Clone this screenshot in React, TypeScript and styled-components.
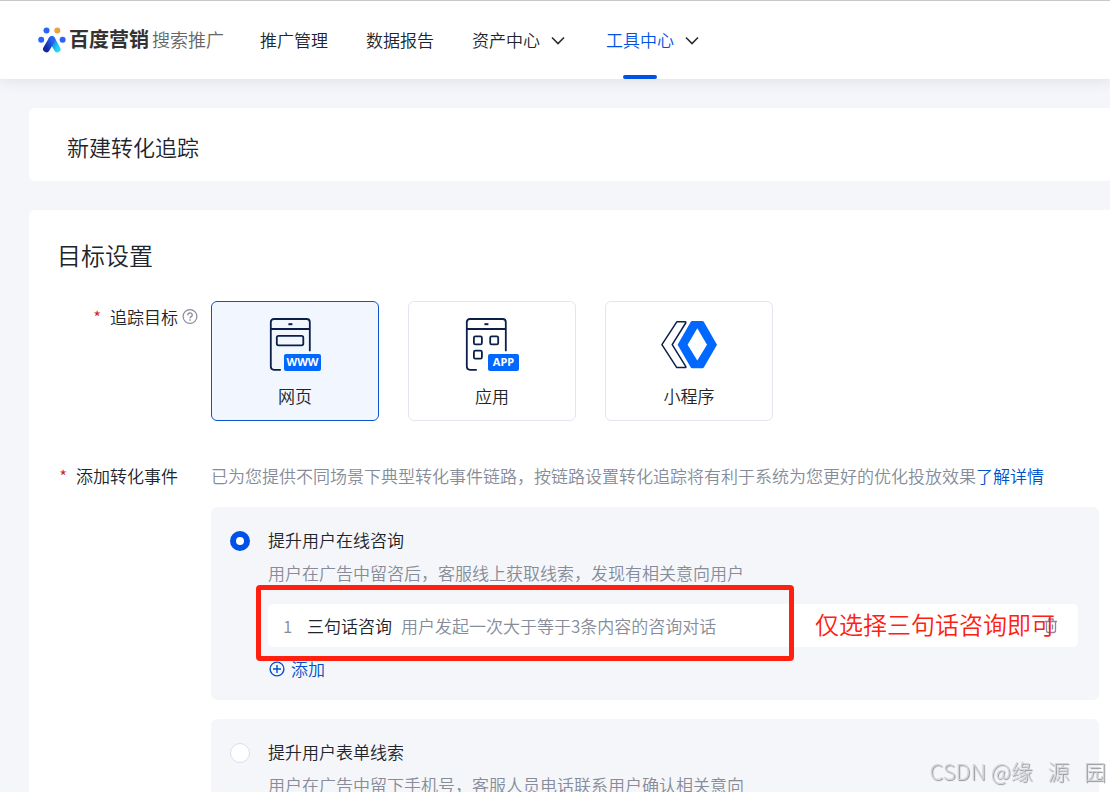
import React, { useState } from "react";
import styled, { createGlobalStyle } from "styled-components";

const GlobalStyle = createGlobalStyle`
  *, *::before, *::after { box-sizing: border-box; }
  body {
    margin: 0;
    background: #f5f6fa;
    color: #20242b;
    font-family: "Noto Sans CJK SC", "Microsoft YaHei", sans-serif;
    font-size: 17px;
    font-weight: 350;
    line-height: 24px;
  }
  button, input { font: inherit; }
`;

const Page = styled.div`
  height: 100vh;
  overflow: hidden;
`;

const Header = styled.header`
  display: flex;
  align-items: center;
  height: 79px;
  padding-left: 38px;
  border-top: 1px solid #c8c8c8;
  background: #fff;
  box-shadow: 0 2px 14px rgba(30, 35, 50, 0.1);
`;

const Brand = styled.a`
  display: flex;
  align-items: center;
  width: 222px;
  color: #333;
  text-decoration: none;
`;

const BrandName = styled.span`
  margin-left: 3px;
  padding-bottom: 2px;
  font-size: 20px;
  font-weight: 700;
`;

const BrandProduct = styled.span`
  margin-left: 3px;
  padding-bottom: 3px;
  font-size: 18px;
  color: #666;
`;

const Nav = styled.nav`
  display: flex;
  gap: 38px;
  height: 100%;
`;

const NavLink = styled.a`
  display: flex;
  align-items: center;
  gap: 10px;
  color: #20242b;
  text-decoration: none;

  svg { margin-right: 2px; }
`;

const NavText = styled.span<{ $active?: boolean }>`
  position: relative;
  display: flex;
  align-items: center;
  height: 100%;
  color: ${(p) => (p.$active ? "#0052e6" : "inherit")};

  &::after {
    content: "";
    display: ${(p) => (p.$active ? "block" : "none")};
    position: absolute;
    bottom: 0;
    left: 25%;
    right: 25%;
    height: 4px;
    border-radius: 2px;
    background: #0052e6;
  }
`;

const Main = styled.main`
  display: flex;
  flex-direction: column;
  gap: 29px;
  padding: 29px 0 0 29px;
`;

const TitleCard = styled.section`
  padding: 22px 38px 19px;
  border-radius: 6px 0 0 6px;
  background: #fff;
`;

const PageTitle = styled.h1`
  margin: 0;
  font-size: 22px;
  font-weight: 350;
  line-height: 32px;
`;

const FormCard = styled.section`
  padding: 29px 11px 29px 0;
  border-radius: 6px 0 0 0;
  background: #fff;
`;

const SectionTitle = styled.h2`
  margin: 0 0 30px 28px;
  font-size: 24px;
  font-weight: 350;
  line-height: 32px;
`;

const FormRow = styled.div`
  display: grid;
  grid-template-columns: 169px 1fr;
  column-gap: 13px;

  & + & { margin-top: 43px; }
`;

const FieldLabel = styled.div<{ $tall?: boolean }>`
  display: flex;
  justify-content: flex-end;
  align-items: center;
  height: 24px;
  margin-top: ${(p) => (p.$tall ? "4px" : "0")};
`;

const Required = styled.span`
  margin-right: 9px;
  color: #d0202e;
`;

const HelpSlot = styled.span`
  display: flex;
  width: 16px;
  margin-left: 4px;
`;

const Options = styled.div`
  display: flex;
  gap: 29px;
`;

const OptionCard = styled.label<{ $selected: boolean }>`
  display: flex;
  flex-direction: column;
  align-items: center;
  gap: 12px;
  width: 168px;
  height: 120px;
  padding-top: 16px;
  border: 1px solid ${(p) => (p.$selected ? "#0a55cc" : "#e2e6f0")};
  border-radius: 6px;
  background: ${(p) => (p.$selected ? "#f1f6ff" : "#fff")};
  cursor: pointer;
`;

const HiddenRadio = styled.input`
  position: absolute;
  opacity: 0;
  pointer-events: none;
`;

const Hint = styled.p`
  margin: 0 0 19px;
  color: #868c99;
  white-space: nowrap;
`;

const HintLink = styled.a`
  color: #0052cc;
  text-decoration: none;
`;

const Panels = styled.div`
  display: flex;
  flex-direction: column;
  gap: 19px;
`;

const Panel = styled.div`
  display: flex;
  gap: 18px;
  padding: 21px 21px 19px 19px;
  border-radius: 6px;
  background: #f5f6fa;
`;

const Radio = styled.input`
  appearance: none;
  flex: none;
  width: 20px;
  height: 20px;
  margin: 3px 0 0;
  border: 1px solid #dadeea;
  border-radius: 50%;
  background: #fff;

  &:checked { border: 6px solid #0052e6; }
`;

const PanelBody = styled.div`
  flex: 1;
  min-width: 0;
`;

const PanelTitle = styled.label`
  display: block;
`;

const PanelText = styled.p`
  margin: 9px 0 0;
  color: #868c99;
`;

const EventRow = styled.div`
  position: relative;
  display: flex;
  align-items: center;
  height: 43px;
  margin: 19px 0 10px;
  padding: 0 20px 0 15px;
  border-radius: 5px;
  background: #fff;
  color: #868c99;
`;

const EventIndex = styled.span`
  width: 24px;
`;

const EventName = styled.span`
  margin-right: 9px;
  color: #20242b;
`;

const IconButton = styled.button`
  display: flex;
  margin-left: auto;
  padding: 0;
  border: 0;
  background: none;
`;

const Marker = styled.div`
  position: absolute;
  top: -19px;
  left: -12px;
  width: 538px;
  height: 76px;
  border: 5px solid #ff2010;
  border-radius: 4px;
  pointer-events: none;
`;

const Note = styled.span`
  position: absolute;
  top: 4px;
  left: 547px;
  color: #ff2010;
  font-size: 24px;
  line-height: 32px;
  white-space: nowrap;
`;

const AddButton = styled.button`
  display: flex;
  align-items: center;
  gap: 6px;
  padding: 0;
  border: 0;
  background: none;
  color: #0052cc;
  line-height: 24px;
`;

const Watermark = styled.div`
  position: fixed;
  right: 4px;
  bottom: 6px;
  color: #d2d4d8;
  font-size: 22px;
  font-weight: 300;
  line-height: 32px;
  text-shadow: 1px 1px 1px #8f9196;
  white-space: pre;
`;

const BrandIcon = () => (
  <svg width="28" height="26" viewBox="0 0 28 26" aria-hidden="true">
    <defs>
      <linearGradient id="legLeft" x1="1" y1="0" x2="0" y2="1">
        <stop offset="0" stopColor="#2468f2" />
        <stop offset="1" stopColor="#1226a0" />
      </linearGradient>
      <linearGradient id="legRight" x1="0" y1="0" x2="1" y2="1">
        <stop offset="0" stopColor="#1f62ee" />
        <stop offset="1" stopColor="#1fd8f4" />
      </linearGradient>
    </defs>
    <circle cx="8.5" cy="3.5" r="3" fill="#2a63f6" />
    <circle cx="19.3" cy="3.5" r="3" fill="#e7a440" />
    <circle cx="3.2" cy="12.7" r="3" fill="#2a63f6" />
    <circle cx="24.6" cy="12.7" r="3" fill="#2a63f6" />
    <path d="M13.9 12.5 L19.2 22" stroke="url(#legRight)" strokeWidth="6.6" strokeLinecap="round" />
    <path d="M13.9 12.5 L8.4 22" stroke="url(#legLeft)" strokeWidth="6.6" strokeLinecap="round" />
  </svg>
);

const Chevron = () => (
  <svg width="16" height="16" viewBox="0 0 16 16" fill="none" stroke="#282c33" strokeWidth="1.6" aria-hidden="true">
    <path d="M2 5.5 L8 11.5 L14 5.5" />
  </svg>
);

const HelpIcon = () => (
  <svg width="16" height="16" viewBox="0 0 16 16" fill="none" stroke="#868c9a" aria-hidden="true">
    <circle cx="8" cy="7.5" r="6.9" strokeWidth="1.2" />
    <path d="M5.8 6.2 C5.8 3.2 10.3 3.3 10.3 6 C10.3 7.7 8 7.6 8 9.3" strokeWidth="1.3" />
    <path d="M8 10.3 V11.7" strokeWidth="1.4" />
  </svg>
);

const Phone = () => (
  <>
    <path d="M13.8 51.8 H7 Q3.8 51.8 3.8 48.6 V4.2 Q3.8 1 7 1 H39.6 Q42.8 1 42.8 4.2 V33.2" />
    <path d="M3.8 11 H42.8" />
    <path d="M21.4 6.2 H25.4" strokeWidth="2" />
  </>
);

const Badge = ({ x, width, text }: { x: number; width: number; text: string }) => (
  <>
    <rect x={x} y="36" width={width} height="17" rx="2" fill="#0068ff" stroke="none" />
    <text
      x={x + width / 2}
      y="48.3"
      fill="#fff"
      stroke="none"
      textAnchor="middle"
      fontFamily="Noto Sans, sans-serif"
      fontWeight="700"
      fontSize="11"
    >
      {text}
    </text>
  </>
);

const WebIcon = () => (
  <svg width="56" height="54" viewBox="0 0 56 54" fill="none" stroke="#0b1f4b" strokeWidth="1.8" aria-hidden="true">
    <Phone />
    <rect x="9.8" y="17.9" width="26.5" height="9.4" rx="1.8" />
    <Badge x={17} width={37} text="WWW" />
  </svg>
);

const AppIcon = () => (
  <svg width="56" height="54" viewBox="0 0 56 54" fill="none" stroke="#0b1f4b" strokeWidth="1.8" aria-hidden="true">
    <g transform="translate(-1 0)">
      <Phone />
    </g>
    <rect x="9.9" y="18.4" width="8" height="8" rx="1.5" />
    <rect x="26.2" y="18.4" width="8" height="8" rx="1.5" />
    <rect x="9.9" y="32.7" width="8" height="8" rx="1.5" />
    <Badge x={24} width={31} text="APP" />
  </svg>
);

const MiniAppIcon = () => (
  <svg width="56" height="54" viewBox="0 0 56 54" fill="none" aria-hidden="true">
    <path
      d="M15.8 3.8 H24 Q25.3 3.8 24.7 5 L11.2 26.7 L24.7 48.4 Q25.3 49.6 24 49.6 H15.8 L.9 26.7 Z"
      stroke="#0b1f4b"
      strokeWidth="1.5"
      strokeLinejoin="round"
    />
    <path
      fillRule="evenodd"
      fill="#0068ff"
      d="M31.3 3 H41.3 Q42.3 3 42.8 3.8 L56 26.7 L42.8 49.4 Q42.3 50.2 41.3 50.2 H31.3 Q30.3 50.2 29.8 49.4 L16.6 26.7 L29.8 3.8 Q30.3 3 31.3 3 Z M36.3 10.3 L26.6 26.7 L36.3 42.6 L46 26.7 Z"
    />
  </svg>
);

const TrashIcon = () => (
  <svg width="14" height="16" viewBox="0 0 14 16" fill="none" stroke="#868c99" strokeWidth="1.3" aria-hidden="true">
    <path d="M1 3.5 H13 M5 3 V1 H9 V3 M2.5 3.5 V12.5 Q2.5 14.5 4.5 14.5 H9.5 Q11.5 14.5 11.5 12.5 V3.5 M5.5 6.5 V11.5 M8.5 6.5 V11.5" />
  </svg>
);

const PlusIcon = () => (
  <svg width="17" height="16" viewBox="0 0 17 16" fill="none" stroke="#0052cc" strokeWidth="1.4" aria-hidden="true">
    <circle cx="9" cy="8" r="6.9" />
    <path d="M5 8 H13 M9 4 V12" />
  </svg>
);

const navItems = [
  { text: "推广管理" },
  { text: "数据报告" },
  { text: "资产中心", menu: true },
  { text: "工具中心", menu: true, active: true },
];

const targets = [
  { id: "web", text: "网页", Icon: WebIcon },
  { id: "app", text: "应用", Icon: AppIcon },
  { id: "mini", text: "小程序", Icon: MiniAppIcon },
];

export default function App() {
  const [target, setTarget] = useState("web");
  const [scene, setScene] = useState("chat");

  return (
    <>
      <GlobalStyle />
      <Page>
        <Header>
          <Brand href="#">
            <BrandIcon />
            <BrandName>百度营销</BrandName>
            <BrandProduct>搜索推广</BrandProduct>
          </Brand>
          <Nav>
            {navItems.map((item) => (
              <NavLink key={item.text} href="#">
                <NavText $active={item.active}>{item.text}</NavText>
                {item.menu && <Chevron />}
              </NavLink>
            ))}
          </Nav>
        </Header>
        <Main>
          <TitleCard>
            <PageTitle>新建转化追踪</PageTitle>
          </TitleCard>
          <FormCard>
            <SectionTitle>目标设置</SectionTitle>
            <FormRow>
              <FieldLabel $tall>
                <Required>*</Required>
                追踪目标
                <HelpSlot>
                  <HelpIcon />
                </HelpSlot>
              </FieldLabel>
              <Options>
                {targets.map(({ id, text, Icon }) => (
                  <OptionCard key={id} $selected={target === id}>
                    <HiddenRadio
                      type="radio"
                      name="target"
                      checked={target === id}
                      onChange={() => setTarget(id)}
                    />
                    <Icon />
                    {text}
                  </OptionCard>
                ))}
              </Options>
            </FormRow>
            <FormRow>
              <FieldLabel>
                <Required>*</Required>
                添加转化事件
                <HelpSlot />
              </FieldLabel>
              <div>
                <Hint>
                  已为您提供不同场景下典型转化事件链路，按链路设置转化追踪将有利于系统为您更好的优化投放效果
                  <HintLink href="#">了解详情</HintLink>
                </Hint>
                <Panels>
                  <Panel>
                    <Radio
                      id="chat"
                      type="radio"
                      name="scene"
                      checked={scene === "chat"}
                      onChange={() => setScene("chat")}
                    />
                    <PanelBody>
                      <PanelTitle htmlFor="chat">提升用户在线咨询</PanelTitle>
                      <PanelText>用户在广告中留咨后，客服线上获取线索，发现有相关意向用户</PanelText>
                      <EventRow>
                        <EventIndex>1</EventIndex>
                        <EventName>三句话咨询</EventName>
                        <span>用户发起一次大于等于3条内容的咨询对话</span>
                        <IconButton type="button" aria-label="删除">
                          <TrashIcon />
                        </IconButton>
                        <Marker />
                        <Note>仅选择三句话咨询即可</Note>
                      </EventRow>
                      <AddButton type="button">
                        <PlusIcon />
                        添加
                      </AddButton>
                    </PanelBody>
                  </Panel>
                  <Panel>
                    <Radio
                      id="form"
                      type="radio"
                      name="scene"
                      checked={scene === "form"}
                      onChange={() => setScene("form")}
                    />
                    <PanelBody>
                      <PanelTitle htmlFor="form">提升用户表单线索</PanelTitle>
                      <PanelText>用户在广告中留下手机号，客服人员电话联系用户确认相关意向</PanelText>
                    </PanelBody>
                  </Panel>
                </Panels>
              </div>
            </FormRow>
          </FormCard>
        </Main>
        <Watermark>CSDN @缘   源   园</Watermark>
      </Page>
    </>
  );
}
